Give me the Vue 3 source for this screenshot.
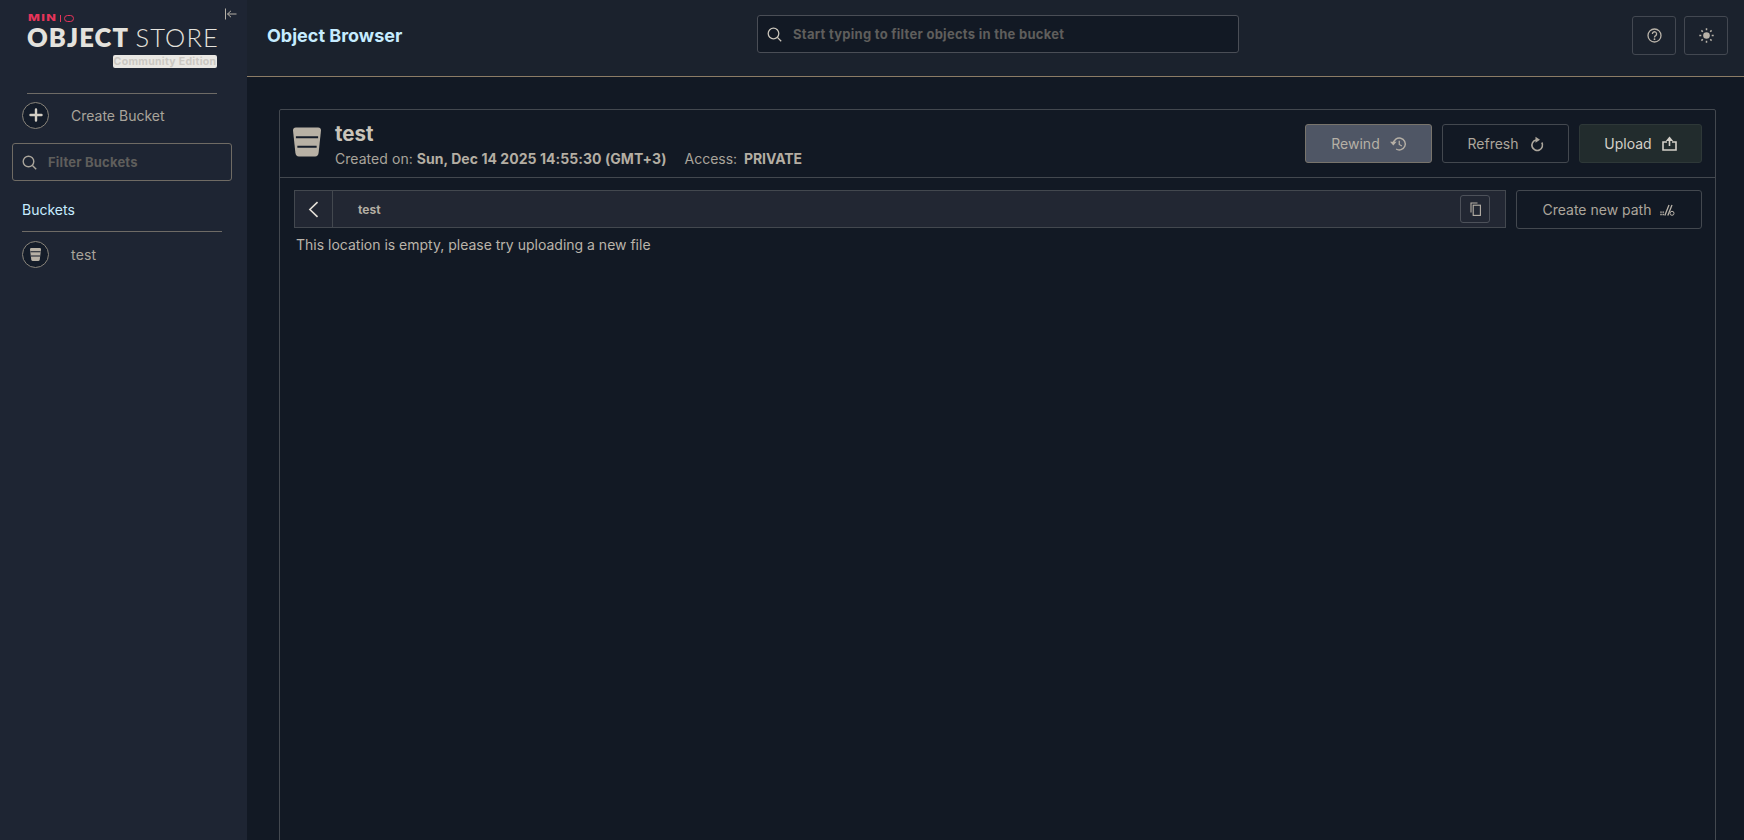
<script setup>
const actions = [
  { label: 'Rewind', cls: 'rewind', icon: 'history' },
  { label: 'Refresh', cls: 'refresh', icon: 'refresh' },
  { label: 'Upload', cls: 'upload', icon: 'upload' },
]
</script>

<template>
  <div class="app">
    <aside class="sidebar">
      <div class="brand">
        <button class="collapse" aria-label="Collapse">
          <svg width="13" height="12" viewBox="0 0 13 12" fill="none" stroke="#b5b0a6" stroke-width="1"><path d="M1.500 0.500v11M12.500 6H3.500M7 2.800 3.500 6 7 9.200"/></svg>
        </button>
        <div class="minio"><span>MIN</span><i></i><b></b></div>
        <div class="product"><strong>OBJECT</strong> <span>STORE</span></div>
        <div class="edition">Community Edition</div>
      </div>
      <div class="rule brand-rule"></div>
      <div class="nav-row create">
        <span class="circle">
          <svg width="14" height="14" viewBox="0 0 14 14" stroke="#d4cfc5" stroke-width="2.400" stroke-linecap="round"><path d="M7 1.500v11M1.500 7h11"/></svg>
        </span>
        <span>Create Bucket</span>
      </div>
      <label class="filter">
        <svg class="search" width="15" height="15" viewBox="0 0 15 15" fill="none" stroke="#aaa59b" stroke-width="1.400"><circle cx="6.500" cy="6.500" r="5.300"/><path d="m10.400 10.400 3.800 3.800"/></svg>
        <span>Filter Buckets</span>
      </label>
      <div class="section">Buckets</div>
      <div class="rule section-rule"></div>
      <div class="nav-row">
        <span class="circle">
          <svg width="13" height="13" viewBox="0 0 26 26"><path d="M2 2.500Q2 0 4.500 0h17Q24 0 24 2.500L21.500 23Q21 26 18.500 26h-11Q5 26 4.500 23Z" fill="#b8b1a5"/><path d="M3 7.500h20M4 16h18" stroke="#151d2a" stroke-width="2.400"/></svg>
        </span>
        <span class="bucket-link">test</span>
      </div>
    </aside>

    <main class="main">
      <header class="topbar">
        <h1>Object Browser</h1>
        <label class="top-search">
          <svg width="15" height="15" viewBox="0 0 15 15" fill="none" stroke="#c9c4ba" stroke-width="1.300"><circle cx="6.500" cy="6.500" r="5.300"/><path d="m10.400 10.400 3.800 3.800"/></svg>
          <span>Start typing to filter objects in the bucket</span>
        </label>
        <div class="top-actions">
          <button class="square" aria-label="Help">
            <svg width="15" height="15" viewBox="0 0 15 15" fill="none"><circle cx="7.500" cy="7.500" r="6.500" stroke="#b8b2a8" stroke-width="1.300"/><path d="M5.400 5.900a2.100 2.100 0 1 1 3.300 1.700c-.8.500-1.200.900-1.200 1.800" stroke="#b8b2a8" stroke-width="1.300"/><circle cx="7.500" cy="11.200" r=".9" fill="#b8b2a8"/></svg>
          </button>
          <button class="square" aria-label="Theme">
            <svg width="15" height="15" viewBox="0 0 15 15" fill="#b8b2a8" stroke="#b8b2a8"><circle cx="7.500" cy="7.500" r="3.300" stroke="none"/><path stroke-width="1.500" d="M7.500.3v2M7.500 12.700v2M.3 7.500h2M12.700 7.500h2M2.400 2.400l1.400 1.400M11.200 11.200l1.400 1.400M2.400 12.600l1.400-1.400M11.200 3.800l1.400-1.400"/></svg>
          </button>
        </div>
      </header>

      <section class="content">
        <div class="panel">
          <div class="panel-head">
            <svg class="bucket" width="28" height="30" viewBox="0 0 29 30"><path d="M0 3Q0 0 3 0h23q3 0 3 3l-2.500 23.500Q26 30 23 30H6q-3 0-3.500-3.500Z" fill="#b8b1a5"/><path d="M3 10h23M4.500 20h20" stroke="#151d2a" stroke-width="2"/></svg>
            <div class="head-text">
              <div class="bucket-name">test</div>
              <div class="meta">
                <span>Created on: <b>Sun, Dec 14 2025 14:55:30 (GMT+3)</b></span>
                <span class="access">Access: &nbsp;<b>PRIVATE</b></span>
              </div>
            </div>
            <div class="head-actions">
              <button v-for="a in actions" :key="a.label" class="action" :class="a.cls">
                <span>{{ a.label }}</span>
                <svg v-if="a.icon === 'history'" width="17" height="16" viewBox="0 0 18 16" fill="none" stroke="currentColor" stroke-width="1.500"><path d="M3.600 7.500A6.300 6.300 0 1 1 6.500 13.300"/><path d="M0 5.500h7L3.500 9.500Z" fill="currentColor" stroke="none"/><path d="M9.800 4.500v4l2.800 1.700" stroke-width="1.300"/></svg>
                <svg v-else-if="a.icon === 'refresh'" width="14" height="16" viewBox="0 0 14 16" fill="none" stroke="currentColor" stroke-width="1.600"><path d="M11.800 6.500A5.300 5.300 0 1 1 6 4"/><path d="M5.500 0.800 10 3.800 5.500 6.800Z" fill="currentColor" stroke="none"/></svg>
                <svg v-else width="15" height="15" viewBox="0 0 15 15" fill="none" stroke="currentColor" stroke-width="1.600"><path d="M7.500 10V2"/><path d="M3.800 5 7.500 0.500 11.200 5Z" fill="currentColor" stroke="none"/><path d="M5 6H1v8h13V6h-4"/></svg>
              </button>
            </div>
          </div>

          <div class="panel-body">
            <div class="path-row">
              <div class="path">
                <button class="back" aria-label="Back">
                  <svg width="11" height="17" viewBox="0 0 10 16" fill="none" stroke="#e4e0d8" stroke-width="1.500"><path d="M8.800 1 1.600 8l7.200 7"/></svg>
                </button>
                <span class="crumb">test</span>
                <button class="copy" aria-label="Copy">
                  <svg width="11" height="14" viewBox="0 0 11 14" fill="none" stroke="#b8b2a8" stroke-width="1.100"><path d="M1 10.500V1h6.500"/><rect x="3.200" y="3.200" width="7.200" height="10.200"/></svg>
                </button>
              </div>
              <button class="action new-path">
                <span>Create new path</span>
                <svg width="15" height="12" viewBox="0 0 15 12" fill="none" stroke="#b8b2a8" stroke-width="1.300"><path d="M1 7.500v1.200M1 9.800v1.400M3.200 7.500v1.200M3.200 9.800v1.400" stroke-width="1.500"/><path d="M4.800 11.500 9 1M7.800 11.500 12 1" /><circle cx="12" cy="9.300" r="2" stroke-width="1"/></svg>
              </button>
            </div>
            <p class="empty">This location is empty, please try uploading a new file</p>
          </div>
        </div>
      </section>
    </main>
  </div>
</template>

<style>
html, body { margin: 0; overflow: hidden; background: #121924; }
</style>

<style scoped>
.app {
  display: flex;
  height: 840px;
  overflow: hidden;
  font-family: Inter, "Liberation Sans", sans-serif;
  color: #bab4aa;
  font-size: 14px;
}
button { font-family: inherit; color: inherit; padding: 0; background: none; cursor: pointer; }

.sidebar {
  width: 247px;
  flex: none;
  background: #1e2533;
  display: flex;
  flex-direction: column;
}
.brand { position: relative; height: 93px; padding-left: 27px; box-sizing: border-box; }
.collapse { position: absolute; left: 224px; top: 8px; border: 0; display: flex; }
.minio {
  display: flex;
  align-items: center;
  gap: 2px;
  height: 8px;
  margin-top: 14px;
  color: #e8345a;
}
.minio span {
  font: 800 9px/8px Inter, sans-serif;
  letter-spacing: 1px;
  transform: scaleX(1.400);
  transform-origin: left;
  width: 30px;
  margin-left: 1px;
}
.minio i { width: 1px; height: 7px; background: #e8345a; }
.minio b { width: 8px; height: 5px; border: 1px solid #e8345a; border-radius: 4px; margin-left: 1px; }
.product {
  font-family: Lato, sans-serif;
  font-size: 25.500px;
  line-height: 26px;
  margin-top: 2px;
  color: #e4e2dd;
  white-space: nowrap;
}
.product strong { font-weight: 800; letter-spacing: 1.100px; }
.product span { font-weight: 300; letter-spacing: 1.100px; }
.edition {
  position: absolute;
  left: 113px;
  top: 55px;
  width: 104px;
  height: 13px;
  border-radius: 2px;
  background: #e9e7e3;
  color: #cbc8c2;
  font-size: 10.500px;
  font-weight: 700;
  line-height: 13px;
  text-align: center;
  letter-spacing: .3px;
  white-space: nowrap;
  overflow: hidden;
}
.rule { height: 1px; background: #6e6b66; }
.brand-rule { margin: 0 30px 0 27px; }
.nav-row {
  display: flex;
  align-items: center;
  gap: 22px;
  padding-left: 22px;
  height: 44px;
  color: #a9a49b;
  font-size: 14px;
}
.create { margin-top: -1px; }
.bucket-link { letter-spacing: .2px; }
.circle {
  width: 27px;
  height: 27px;
  box-sizing: border-box;
  flex: none;
  border: 1px solid #8a857b;
  border-radius: 50%;
  background: #141c29;
  display: flex;
  align-items: center;
  justify-content: center;
}
.filter {
  margin: 6px 15px 0 12px;
  height: 38px;
  box-sizing: border-box;
  border: 1px solid #6f6b64;
  border-radius: 3px;
  display: flex;
  align-items: center;
  gap: 11px;
  padding-left: 9px;
  color: #5f5e5c;
  font-weight: 700;
  font-size: 13px;
  letter-spacing: .2px;
}
.section {
  margin: 19px 0 0 22px;
  height: 20px;
  line-height: 20px;
  color: #c6ecff;
  font-size: 14px;
}
.section-rule { margin: 11px 25px 0 22px; }

.main { flex: 1; min-width: 0; display: flex; flex-direction: column; }
.topbar {
  height: 77px;
  flex: none;
  box-sizing: border-box;
  background: #1b222d;
  border-bottom: 1px solid #8c7c66;
  position: relative;
  display: flex;
  align-items: center;
  padding: 0 16px 6px 20px;
}
h1 {
  margin: 0;
  font-size: 18px;
  font-weight: 700;
  color: #c6ecff;
}
.top-search {
  position: absolute;
  left: 510px;
  top: 15px;
  width: 482px;
  height: 38px;
  box-sizing: border-box;
  border: 1px solid #4a4e56;
  border-radius: 3px;
  background: #121924;
  display: flex;
  align-items: center;
  gap: 11px;
  padding-left: 9px;
  color: #5f5e5c;
  font-size: 13px;
  font-weight: 700;
  letter-spacing: .27px;
}
.top-actions { margin-left: auto; display: flex; gap: 8px; }
.square {
  width: 44px;
  height: 39px;
  border: 1px solid #434851;
  border-radius: 3px;
  display: flex;
  align-items: center;
  justify-content: center;
}

.content { flex: 1; min-height: 0; background: #121924; padding: 32px 28px 0 32px; }
.panel { border: 1px solid #43484f; border-radius: 2px 2px 0 0; height: 900px; }
.panel-head {
  height: 68px;
  box-sizing: border-box;
  border-bottom: 1px solid #43484f;
  display: flex;
  align-items: center;
  padding: 0 13px 0 13px;
}
.bucket { flex: none; margin: 0 14px 3px 0; }
.head-text { padding-top: 3px; }
.bucket-name { font-size: 20.500px; font-weight: 700; line-height: 24px; color: #c9c4ba; }
.meta { font-size: 14px; line-height: 20px; margin-top: 3px; color: #a9a49b; white-space: nowrap; letter-spacing: .05px; }
.meta b { font-weight: 700; color: #b4aea3; }
.access { margin-left: 18px; letter-spacing: 0; }
.access b { margin-left: -1px; letter-spacing: -.1px; }
.head-actions { margin-left: auto; display: flex; gap: 10px; }
.action {
  height: 39px;
  box-sizing: border-box;
  border: 1px solid #43484f;
  border-radius: 3px;
  display: flex;
  align-items: center;
  justify-content: center;
  gap: 11px;
  font-size: 14px;
  color: #aca69c;
  background: #121924;
  width: 127px;
}
.rewind { background: #4f5665; border-color: #78746c; color: #b6b0a6; gap: 10px; padding-left: 1px; }
.upload { background: #222c2d; border-color: #2e3838; color: #d4d0c8; width: 123px; gap: 10px; }
.panel-body { padding: 12px 13px 0 14px; }
.path-row { display: flex; gap: 10px; align-items: flex-start; }
.path {
  flex: 1;
  height: 38px;
  box-sizing: border-box;
  border: 1px solid #43484f;
  background: #222733;
  display: flex;
  align-items: center;
}
.back {
  width: 38px;
  height: 100%;
  flex: none;
  border: 0;
  border-right: 1px solid #43484f;
  display: flex;
  align-items: center;
  justify-content: center;
}
.crumb { margin-left: 25px; font-size: 12px; font-weight: 700; color: #b4aea3; }
.copy {
  margin-left: auto;
  margin-right: 15px;
  width: 30px;
  height: 28px;
  border: 1px solid #4d515a;
  border-radius: 3px;
  display: flex;
  align-items: center;
  justify-content: center;
}
.new-path { width: 186px; height: 39px; gap: 9px; }
.empty { margin: 6px 0 0 2px; font-size: 14px; line-height: 20px; color: #bab4aa; }
</style>
